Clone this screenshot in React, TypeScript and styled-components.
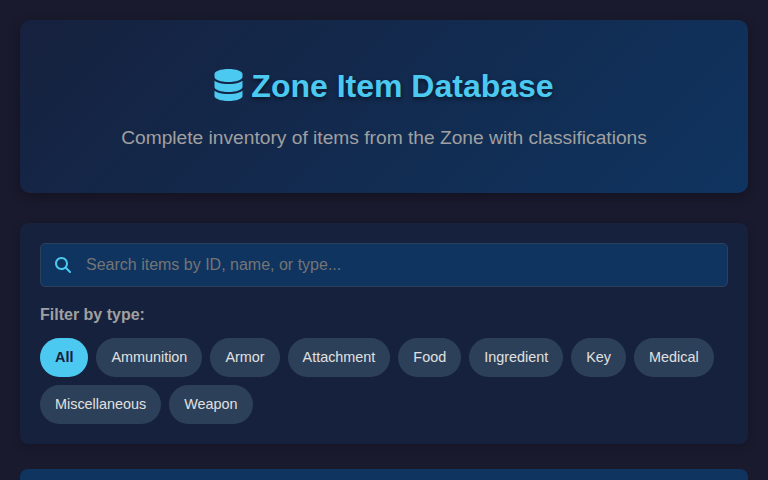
import styled, { createGlobalStyle } from 'styled-components';
import { FaDatabase, FaMagnifyingGlass } from 'react-icons/fa6';

const GlobalStyle = createGlobalStyle`
  * {
    box-sizing: border-box;
  }
  html, body {
    margin: 0;
    height: 480px;
    overflow: hidden;
    background: #1a1a2e;
    font-family: "Liberation Sans", Arial, sans-serif;
  }
`;

const Page = styled.div`
  display: flex;
  flex-direction: column;
  padding: 20px;
`;

const Header = styled.header`
  height: 173px;
  margin-bottom: 30px;
  padding: 40px 20px;
  text-align: center;
  background: linear-gradient(135deg, #16213e, #0f3460);
  border-radius: 10px;
  box-shadow: 0 4px 12px rgba(0, 0, 0, 0.3);
`;

const Title = styled.h1`
  display: flex;
  align-items: center;
  justify-content: center;
  gap: 8px;
  margin: 0 0 15px;
  height: 52px;
  font-size: 32px;
  font-weight: 700;
  color: #4cc9f0;
  text-shadow: 0 2px 4px rgba(0, 0, 0, 0.5);
  svg {
    width: 29px;
    height: 32px;
    margin-top: -2px;
  }
`;

const Subtitle = styled.p`
  margin: 0;
  font-size: 19.2px;
  line-height: 22px;
  color: #a0a0a0;
`;

const Controls = styled.section`
  margin-bottom: 25px;
  padding: 20px;
  background: #16213e;
  border-radius: 8px;
  box-shadow: 0 2px 8px rgba(0, 0, 0, 0.2);
`;

const SearchBox = styled.div`
  position: relative;
  margin-bottom: 19px;
  color: #4cc9f0;
  svg {
    position: absolute;
    left: 15px;
    top: 14px;
    width: 16px;
    height: 16px;
  }
`;

const SearchInput = styled.input`
  display: block;
  width: 100%;
  height: 44px;
  padding: 0 15px 0 45px;
  font-family: inherit;
  font-size: 16px;
  color: #e0e0e0;
  background: #0f3460;
  border: 1px solid #2d4059;
  border-radius: 5px;
  outline: none;
  &::placeholder {
    color: #757575;
    opacity: 1;
  }
`;

const FilterLabel = styled.div`
  margin-bottom: 14px;
  font-size: 16px;
  line-height: 18px;
  font-weight: 700;
  color: #a0a0a0;
`;

const Pills = styled.div`
  display: flex;
  flex-wrap: wrap;
  gap: 8px;
`;

const Pill = styled.button<{ $active?: boolean }>`
  height: 39px;
  padding: 0 15px 1px;
  font-family: inherit;
  font-size: 14.4px;
  font-weight: ${p => (p.$active ? 700 : 400)};
  color: ${p => (p.$active ? '#16213e' : '#e0e0e0')};
  background: ${p => (p.$active ? '#4cc9f0' : '#2d4059')};
  border: none;
  border-radius: 20px;
`;

const ResultsBar = styled.div`
  height: 60px;
  background: #0f3460;
  border-radius: 8px;
`;

const types = ['All', 'Ammunition', 'Armor', 'Attachment', 'Food', 'Ingredient', 'Key', 'Medical', 'Miscellaneous', 'Weapon'];

export default function App(): JSX.Element {
  return (
    <>
      <GlobalStyle />
      <Page>
        <Header>
          <Title>
            <FaDatabase />
            Zone Item Database
          </Title>
          <Subtitle>Complete inventory of items from the Zone with classifications</Subtitle>
        </Header>
        <Controls>
          <SearchBox>
            <FaMagnifyingGlass />
            <SearchInput placeholder="Search items by ID, name, or type..." />
          </SearchBox>
          <FilterLabel>Filter by type:</FilterLabel>
          <Pills>
            {types.map(type => (
              <Pill key={type} $active={type === 'All'}>
                {type}
              </Pill>
            ))}
          </Pills>
        </Controls>
        <ResultsBar />
      </Page>
    </>
  );
}
